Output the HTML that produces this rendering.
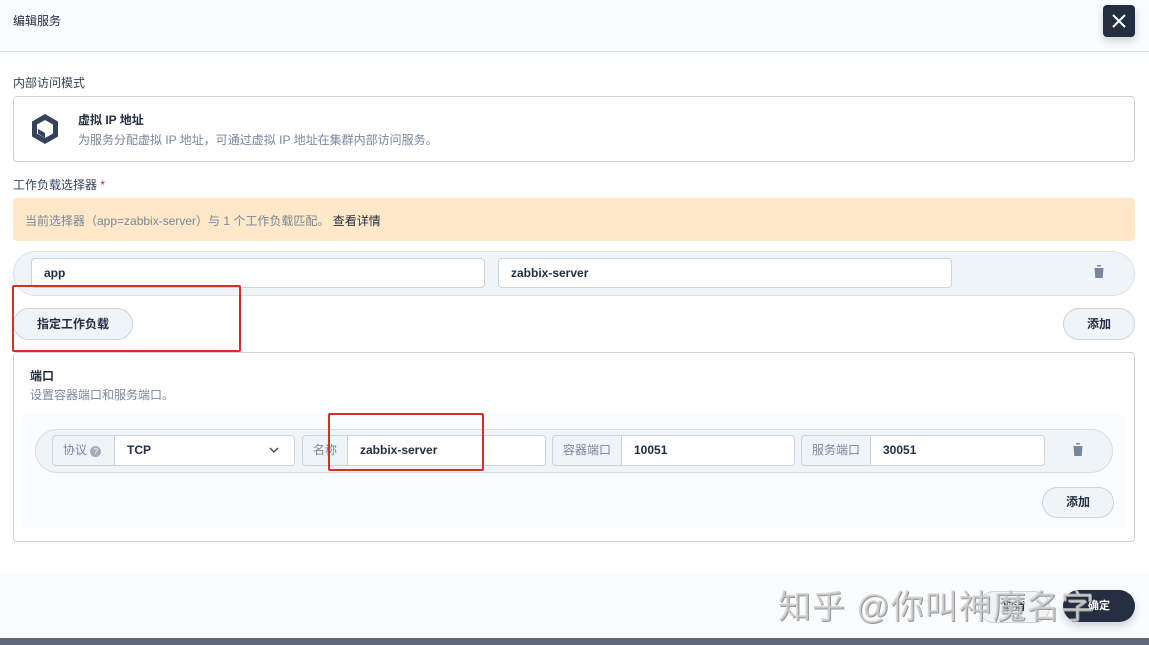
<!DOCTYPE html><html><head><meta charset="utf-8"><style>
*{box-sizing:border-box;margin:0;padding:0}
body{width:1149px;height:645px;overflow:hidden;background:#fff;font-family:"Liberation Sans","Noto Sans CJK SC",sans-serif;font-size:12px;color:#242e42;position:relative}
.a{position:absolute}
.lbl{font-size:12px;color:#36435c}
.inp{position:absolute;background:#fff;border:1px solid #ccd3db;border-radius:4px;height:30px;line-height:28px;padding-left:12px;font-weight:bold;font-size:12px;color:#242e42}
.grp{position:absolute;height:31px;border:1px solid #ccd3db;border-radius:4px;background:#eff4f9;display:flex;overflow:hidden}
.grp .l{padding-left:10px;line-height:29px;color:#79879c;border-right:1px solid #ccd3db}
.grp .v{background:#fff;flex:1;line-height:29px;padding-left:12px;font-weight:bold}
.btn{position:absolute;background:#eff4f9;border:1px solid #ccd3db;border-radius:16px;text-align:center;font-weight:bold;font-size:12px}
</style></head><body>
<div class="a" style="left:0;top:0;width:1149px;height:52px;background:#f9fbfd;border-bottom:1px solid #d8dee5"></div>
<div class="a" style="left:13px;top:12px;font-size:12px">编辑服务</div>
<div class="a" style="left:1103px;top:5px;width:32px;height:32px;background:#242e42;border-radius:4px;box-shadow:0 4px 8px rgba(36,46,66,.2)"><svg width="32" height="32"><path d="M10 10L22 22M22 10L10 22" stroke="#fff" stroke-width="2"/></svg></div>
<div class="a lbl" style="left:13px;top:74px">内部访问模式</div>
<div class="a" style="left:13px;top:96px;width:1122px;height:66px;border:1px solid #ccd3db;border-radius:4px"></div>
<svg class="a" style="left:29px;top:112px" width="34" height="34"><path d="M16 2L29 9.5V24.5L16 32L3 24.5V9.5Z" fill="#36435c"/><path d="M16 8L24 12.5V21.5L16 26L8 21.5V12.5Z" fill="#fff"/><path d="M9 17L16 21V26L9 21.5Z" fill="#36435c"/></svg>
<div class="a" style="left:78px;top:111px;font-weight:bold">虚拟 IP 地址</div>
<div class="a" style="left:78px;top:131px;color:#79879c">为服务分配虚拟 IP 地址，可通过虚拟 IP 地址在集群内部访问服务。</div>
<div class="a lbl" style="left:13px;top:176px">工作负载选择器 <span style="color:#ca2621">*</span></div>
<div class="a" style="left:13px;top:198px;width:1122px;height:43px;background:#fee8c8;border-radius:4px"></div>
<div class="a" style="left:25px;top:212px;color:#79879c">当前选择器（app=zabbix-server）与 1 个工作负载匹配。 <span style="color:#242e42">查看详情</span></div>
<div class="a" style="left:13px;top:251px;width:1122px;height:45px;background:#eff4f9;border:1px solid #dde3ea;border-radius:23px"></div>
<div class="inp" style="left:31px;top:258px;width:454px">app</div>
<div class="inp" style="left:498px;top:258px;width:454px">zabbix-server</div>
<svg class="a" style="left:1092px;top:264px" width="14" height="15"><path d="M1 2.5H13M5 2.5V1H9V2.5M2.5 4H11.5L10.7 14H3.3Z" fill="#79879c"/></svg>
<div class="btn" style="left:13px;top:308px;width:120px;height:32px;line-height:30px">指定工作负载</div>
<div class="btn" style="left:1063px;top:308px;width:72px;height:32px;line-height:30px">添加</div>
<div class="a" style="left:12px;top:285px;width:229px;height:67px;border:2px solid #d3302a;border-radius:2px"></div>
<div class="a" style="left:13px;top:352px;width:1122px;height:190px;border:1px solid #ccd3db;border-radius:4px"></div>
<div class="a" style="left:30px;top:367px;font-weight:bold">端口</div>
<div class="a" style="left:30px;top:386px;color:#79879c">设置容器端口和服务端口。</div>
<div class="a" style="left:22px;top:415px;width:1103px;height:113px;background:#f9fbfd"></div>
<div class="a" style="left:35px;top:429px;width:1078px;height:44px;background:#eff4f9;border:1px solid #d5dde5;border-radius:22px"></div>
<div class="grp" style="left:52px;top:435px;width:243px"><div class="l" style="width:62px">协议 <span style="display:inline-block;width:11px;height:11px;border-radius:50%;background:#a2adbd;color:#fff;font-size:8px;line-height:11px;text-align:center">?</span></div><div class="v">TCP</div></div>
<svg class="a" style="left:269px;top:447px" width="10" height="7"><path d="M1 1L5 5L9 1" stroke="#36435c" stroke-width="1.3" fill="none"/></svg>
<div class="grp" style="left:302px;top:435px;width:244px"><div class="l" style="width:45px">名称</div><div class="v">zabbix-server</div></div>
<div class="grp" style="left:552px;top:435px;width:243px"><div class="l" style="width:69px">容器端口</div><div class="v">10051</div></div>
<div class="grp" style="left:801px;top:435px;width:244px"><div class="l" style="width:69px">服务端口</div><div class="v">30051</div></div>
<svg class="a" style="left:1071px;top:442px" width="14" height="15"><path d="M1 2.5H13M5 2.5V1H9V2.5M2.5 4H11.5L10.7 14H3.3Z" fill="#79879c"/></svg>
<div class="btn" style="left:1042px;top:487px;width:72px;height:31px;line-height:29px">添加</div>
<div class="a" style="left:328px;top:413px;width:156px;height:58px;border:2px solid #d3302a;border-radius:2px"></div>
<div class="a" style="left:0;top:575px;width:1149px;height:63px;background:#f9fbfd"></div>
<div class="a" style="left:0;top:638px;width:1149px;height:7px;background:#5f6776"></div>
<div class="btn" style="left:978px;top:591px;width:72px;height:32px;line-height:30px;font-size:11px">取消</div>
<div class="btn" style="left:1063px;top:590px;width:72px;height:32px;line-height:32px;background:#242e42;color:#fff;border:none;font-size:11px;box-shadow:0 4px 8px rgba(36,46,66,.2)">确定</div>
<div class="a" style="left:778px;top:580px;font-size:33px;color:rgba(210,210,210,.8);letter-spacing:1px;text-shadow:1px 1px 0 #999">知乎 @你叫神魔名字</div>
</body></html>
